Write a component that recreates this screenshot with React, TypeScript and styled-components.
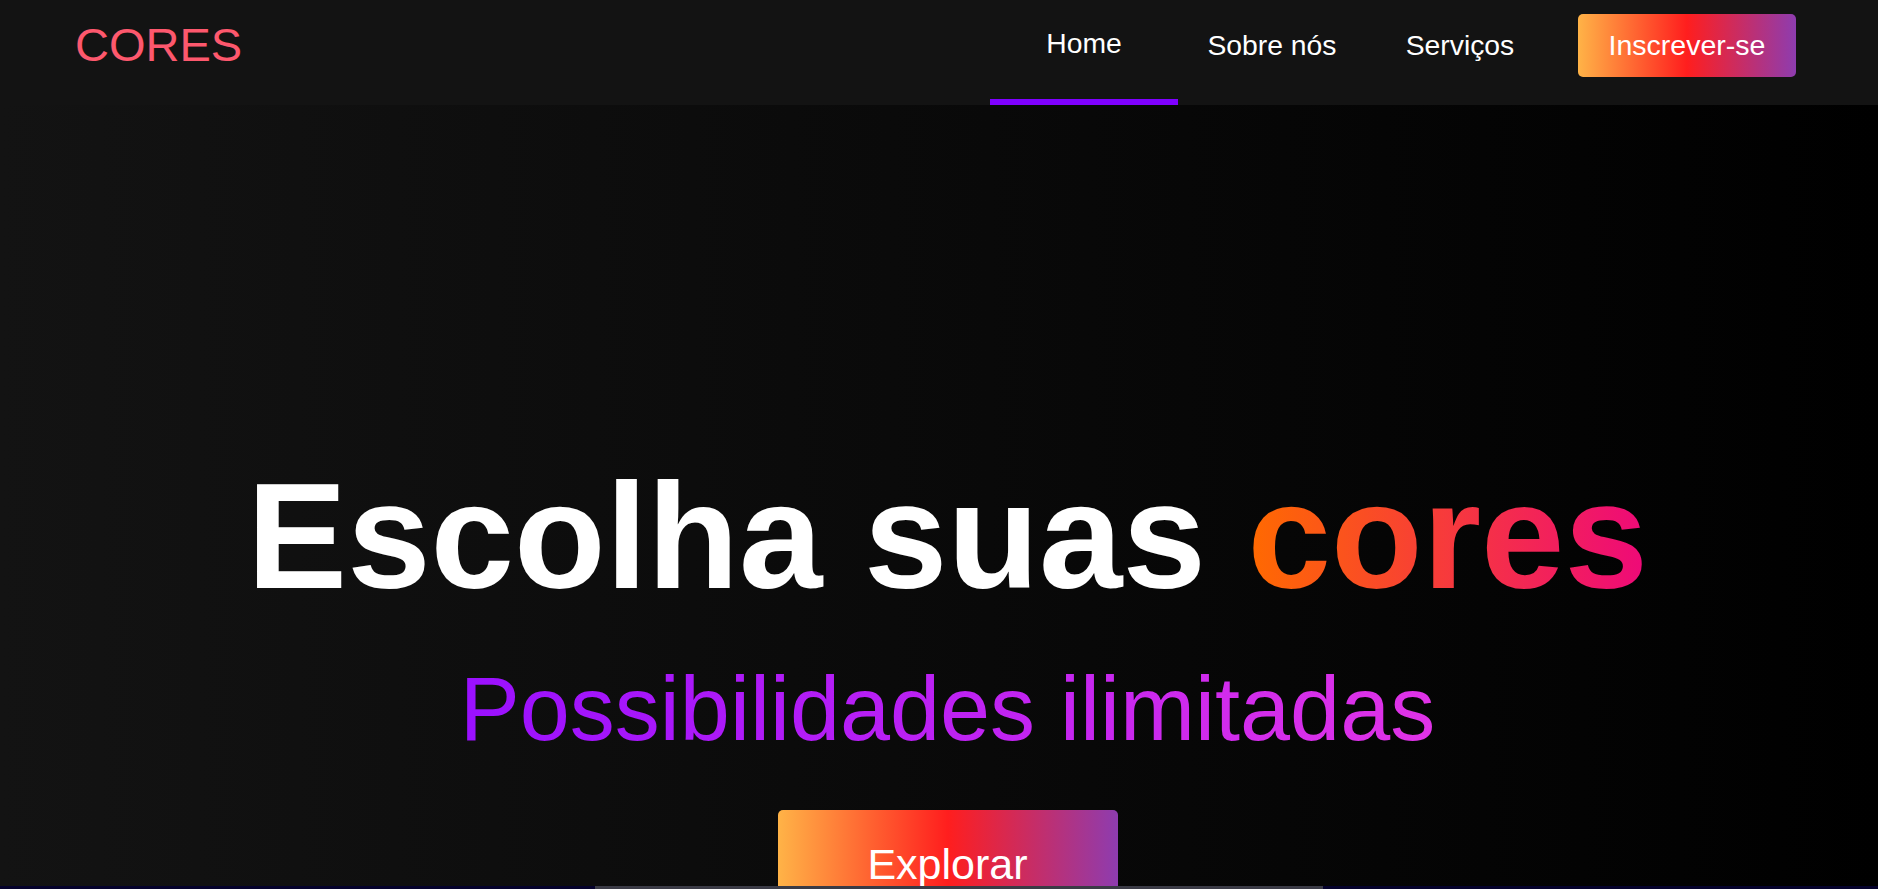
import React from "react";
import styled, { createGlobalStyle } from "styled-components";

const GlobalStyle = createGlobalStyle`
  * {
    box-sizing: border-box;
  }

  html,
  body {
    margin: 0;
    padding: 0;
    overflow: hidden;
    background: #000;
    font-family: "Liberation Sans", Arial, sans-serif;
  }
`;

const links = [
  { label: "Home", active: true },
  { label: "Sobre nós", active: false },
  { label: "Serviços", active: false },
];

function App() {
  return (
    <Page>
      <GlobalStyle />
      <Header>
        <Logo>CORES</Logo>
        <Nav>
          {links.map((link) => (
            <NavLink key={link.label} href="#" $active={link.active}>
              {link.label}
            </NavLink>
          ))}
          <SignUp>Inscrever-se</SignUp>
        </Nav>
      </Header>
      <Hero>
        <Title>
          Escolha suas <Highlight>cores</Highlight>
        </Title>
        <Subtitle>Possibilidades ilimitadas</Subtitle>
        <Explore>Explorar</Explore>
      </Hero>
      <BottomBar>
        <Thumb />
      </BottomBar>
    </Page>
  );
}

const warmGradient = "linear-gradient(to right, #ffb347 0%, #ff1e1e 50%, #8e3caf 100%)";

const Page = styled.div`
  display: flex;
  flex-direction: column;
  min-height: 100vh;
`;

const Header = styled.header`
  height: 105px;
  display: flex;
  align-items: center;
  justify-content: space-between;
  padding: 0 82px 15px 75px;
  background: #131313;
`;

const Logo = styled.div`
  color: #fd586d;
  font-size: 47px;
  line-height: 1.15;
`;

const Nav = styled.nav`
  display: flex;
  align-items: center;
  align-self: stretch;
  margin-bottom: -15px;
`;

const NavLink = styled.a<{ $active: boolean }>`
  width: 188px;
  height: 100%;
  display: flex;
  align-items: center;
  justify-content: center;
  padding-bottom: ${({ $active }) => ($active ? 13 : 9)}px;
  border-bottom: 6px solid ${({ $active }) => ($active ? "#7f00ff" : "transparent")};
  color: #fff;
  font-size: 28.3px;
  text-decoration: none;
`;

const SignUp = styled.button`
  width: 218px;
  height: 63px;
  margin: 0 0 15px 24px;
  padding: 0;
  border: none;
  border-radius: 5px;
  background: ${warmGradient};
  color: #fff;
  font-family: inherit;
  font-size: 28.5px;
  cursor: pointer;
`;

const Hero = styled.main`
  flex: 1;
  display: flex;
  flex-direction: column;
  align-items: center;
  padding: 345px 0 0 17px;
  background: linear-gradient(to right, #131313, #000);
`;

const Title = styled.h1`
  margin: 0;
  color: #fff;
  font-size: 150px;
  font-weight: 700;
  line-height: 1.15;
  white-space: nowrap;
`;

const Highlight = styled.span`
  background: linear-gradient(to right, #ff6a00, #ee0979);
  -webkit-background-clip: text;
  background-clip: text;
  color: transparent;
`;

const Subtitle = styled.h2`
  margin: 35px 0 0;
  font-size: 90px;
  font-weight: 400;
  line-height: 1.15;
  white-space: nowrap;
  background: linear-gradient(to right, #9a10ff, #e033e7);
  -webkit-background-clip: text;
  background-clip: text;
  color: transparent;
`;

const Explore = styled.button`
  width: 340px;
  height: 109px;
  margin-top: 49px;
  padding: 0;
  border: none;
  border-radius: 5px;
  background: ${warmGradient};
  color: #fff;
  font-family: inherit;
  font-size: 43px;
  line-height: 1.15;
  cursor: pointer;
`;

const BottomBar = styled.div`
  position: fixed;
  left: 0;
  right: 0;
  bottom: 0;
  height: 3px;
  background: #05022c;
`;

const Thumb = styled.div`
  width: 728px;
  height: 100%;
  margin-left: 595px;
  background: #3b3b46;
`;

export default App;
